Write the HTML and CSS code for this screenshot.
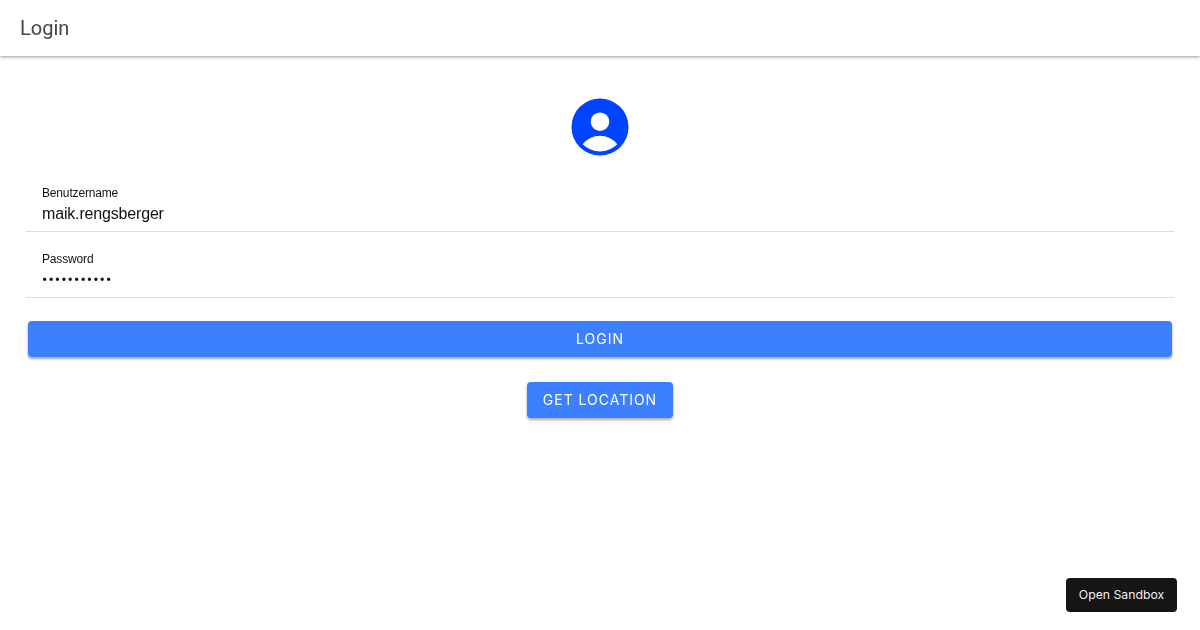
FILE: index.html
```html
<!DOCTYPE html>
<html lang="de">
<head>
<meta charset="utf-8">
<title>Login</title>
<link rel="stylesheet" href="styles.css">
</head>
<body>
<header class="app-bar"><h1 class="app-title">Login</h1></header>
<main class="page">
  <svg class="avatar" viewBox="-35 -35 70 70" aria-hidden="true"><path fill-rule="evenodd" d="M0-28.5A28.5 28.5 0 1 1 0 28.5A28.5 28.5 0 1 1 0-28.5ZM0-14.6A9.3 9.3 0 1 0 0 4A9.3 9.3 0 1 0 0-14.6ZM-17.3 17.3A21.7 21.7 0 0 1 17.3 17.3A24.5 24.5 0 0 1-17.3 17.3Z"/></svg>
  <form class="form">
    <label class="field">
      <span class="field-label">Benutzername</span>
      <input class="field-input" type="text" value="maik.rengsberger">
    </label>
    <label class="field">
      <span class="field-label">Password</span>
      <input class="field-input field-secret" type="password" value="maikmaikmai">
    </label>
    <button class="btn btn-block" type="button">Login</button>
    <button class="btn btn-center" type="button">Get location</button>
  </form>
</main>
<a class="sandbox">Open Sandbox</a>
</body>
</html>
```
FILE: styles.css
```css
* { box-sizing: border-box; }
html, body { margin: 0; height: 100%; }
body { background: #fff; font-family: "Liberation Sans", Arial, sans-serif; overflow: hidden; position: relative; }
.app-bar { height: 56px; display: flex; align-items: center; padding: 0 20px; background: #fff; box-shadow: 0 1px 3px rgba(0,0,0,.4); }
.app-title { margin: 0; font: 400 20px/1 Roboto, sans-serif; color: #444; will-change: transform; }
.page { display: flex; flex-direction: column; align-items: stretch; padding: 0 26px; }
.avatar { display: block; width: 70px; height: 70px; margin: 36px auto 0; fill: #0044ff; }
.form { display: flex; flex-direction: column; margin-top: 8px; will-change: transform; }
.field { display: flex; flex-direction: column; height: 62px; padding: 16px 16px 0; border-bottom: 1px solid #ddd; }
.field + .field { margin-top: 4px; }
.field-label { font-size: 12px; line-height: 14px; letter-spacing: -.16px; color: #111; }
.field-input { border: 0; outline: 0; padding: 0; margin: 4px 0 0; height: 20px; font: 16px/20px "Liberation Sans", Arial, sans-serif; letter-spacing: -.17px; color: #111; background: transparent; }
.field-secret { font-family: Roboto, sans-serif; letter-spacing: 1px; }
.btn { border: 0; height: 36px; border-radius: 4px; background: #3d80ff; color: #fff; font: 375 14px/36px Inter, sans-serif; letter-spacing: .98px; text-transform: uppercase; box-shadow: 0 2px 3px rgba(0,0,0,.35); padding: 0 15.5px; }
.btn-block { margin: 23px 2px 0; }
.btn-center { margin: 25px auto 0; }
.sandbox { position: absolute; left: 1066px; top: 578px; width: 111px; height: 34px; display: flex; align-items: center; justify-content: center; border-radius: 4px; background: #151515; color: #f0f0f0; font: 400 12.25px/1 Inter, sans-serif; }
```
